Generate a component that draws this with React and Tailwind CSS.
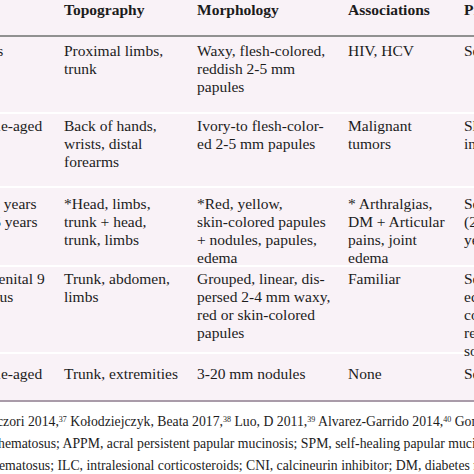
const COLS = ['w-[97px]', 'w-[133px]', 'w-[151px]', 'w-[116px]', 'w-[110px]']

const HEAD = ['', 'Topography', 'Morphology', 'Associations', 'Prognosis']

// each row: height, top padding, cells as arrays of lines
const ROWS = [
  {
    h: 'h-[77px]',
    pt: 'pt-[5px]',
    cells: [
      [['Adults', '-ml-[5px]']],
      ['Proximal limbs,', 'trunk'],
      ['Waxy, flesh-colored,', 'reddish 2-5 mm', 'papules'],
      ['HIV, HCV'],
      ['Self-limited'],
    ],
  },
  {
    h: 'h-[74px]',
    pt: 'pt-[3px]',
    cells: [
      [['Middle-aged', '-ml-[4px]']],
      ['Back of hands,', 'wrists, distal', 'forearms'],
      ['Ivory-to flesh-color-', 'ed 2-5 mm papules'],
      ['Malignant', 'tumors'],
      ['Slowly', 'increasing'],
    ],
  },
  {
    h: 'h-[79px]',
    pt: 'pt-[7px]',
    cells: [
      [['*30-60 years', '-ml-[11px]'], ['*10-15 years', '-ml-[10px]']],
      ['*Head, limbs,', 'trunk + head,', 'trunk, limbs'],
      ['*Red, yellow,', 'skin-colored papules', '+ nodules, papules,', 'edema'],
      ['* Arthralgias,', 'DM + Articular', 'pains, joint', 'edema'],
      ['Self-healing', '(2 weeks-8', 'years)'],
    ],
  },
  {
    h: 'h-[87px]',
    pt: 'pt-[3px]',
    cells: [
      [['Congenital 9', '-ml-[2px]'], ['Various', '-ml-[1px]']],
      ['Trunk, abdomen,', 'limbs'],
      ['Grouped, linear, dis-', 'persed 2-4 mm waxy,', 'red or skin-colored', 'papules'],
      ['Familiar'],
      ['Self-healing', 'edema,', 'complete', 'resolution', 'sometimes'],
    ],
  },
  {
    h: 'h-[48px]',
    pt: 'pt-[11px]',
    cells: [
      [['Middle-aged', '-ml-[4px]']],
      ['Trunk, extremities'],
      ['3-20 mm nodules'],
      ['None'],
      ['Self-limited'],
    ],
  },
]

function Cell({ lines, i }) {
  return (
    <div className={`${COLS[i]} shrink-0`}>
      {lines.map((l, k) => {
        const [text, shift] = Array.isArray(l) ? l : [l, '']
        return (
          <div key={k} className={`whitespace-nowrap h-[18px] ${shift}`}>
            {text}
          </div>
        )
      })}
    </div>
  )
}

export default function App() {
  return (
    <div className="w-[474px] h-[474px] overflow-hidden bg-white text-[#1c1c1c] font-['Liberation_Serif',serif]">
      {/* Table */}
      <div className="-ml-[33px] w-[620px] bg-[#f9f2f7] text-[15.5px] leading-[18px]">
        <div className="flex h-[37px] pt-[1px] border-b-2 border-[#919191] font-bold">
          {HEAD.map((t, i) => (
            <div key={i} className={`${COLS[i]} shrink-0 whitespace-nowrap`}>
              {t}
            </div>
          ))}
        </div>
        {ROWS.map((r, idx) => (
          <div
            key={idx}
            className={`flex ${r.h} ${r.pt} ${idx < ROWS.length - 1 ? 'border-b-2 border-white' : 'border-b-2 border-[#a99ba9]'}`}
          >
            {r.cells.map((c, i) => (
              <Cell key={i} lines={c} i={i} />
            ))}
          </div>
        ))}
      </div>

      {/* Footnotes */}
      <div className="mt-[9px] text-[13.75px] leading-[22px] whitespace-nowrap">
        <div className="-ml-[3px]">
          czori 2014,<sup className="text-[8px]">37</sup> Kołodziejczyk, Beata 2017,<sup className="text-[8px]">38</sup> Luo, D 2011,<sup className="text-[8px]">39</sup> Alvarez-Garrido 2014,<sup className="text-[8px]">40</sup> Gomez-Ramirez 2015
        </div>
        <div className="-ml-[2px]">
          hematosus; APPM, acral persistent papular mucinosis; SPM, self-healing papular mucinosis
        </div>
        <div className="-ml-[1px]">
          ematosus; ILC, intralesional corticosteroids; CNI, calcineurin inhibitor; DM, diabetes mellitus
        </div>
      </div>
    </div>
  )
}
